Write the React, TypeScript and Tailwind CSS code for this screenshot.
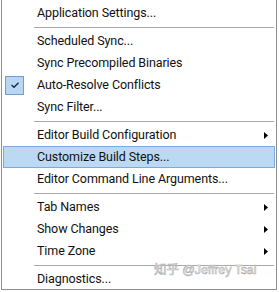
const items: (
  | { kind: "sep" }
  | { kind: "item"; label: string; sub?: boolean; checked?: boolean; active?: boolean }
)[] = [
  { kind: "item", label: "Application Settings..." },
  { kind: "sep" },
  { kind: "item", label: "Scheduled Sync..." },
  { kind: "item", label: "Sync Precompiled Binaries" },
  { kind: "item", label: "Auto-Resolve Conflicts", checked: true },
  { kind: "item", label: "Sync Filter..." },
  { kind: "sep" },
  { kind: "item", label: "Editor Build Configuration", sub: true },
  { kind: "item", label: "Customize Build Steps...", active: true },
  { kind: "item", label: "Editor Command Line Arguments..." },
  { kind: "sep" },
  { kind: "item", label: "Tab Names", sub: true },
  { kind: "item", label: "Show Changes", sub: true },
  { kind: "item", label: "Time Zone", sub: true },
  { kind: "sep" },
  { kind: "item", label: "Diagnostics..." },
];

function Arrow() {
  return (
    <svg width="4" height="7" viewBox="0 0 4 7" className="shrink-0">
      <path d="M0 0 L4 3.5 L0 7 Z" fill="#000" />
    </svg>
  );
}

function Check() {
  return (
    <div className="w-[19px] h-[19px] flex items-center justify-center bg-[#b9d6f2] border border-[#6e9fd3]">
      <svg width="8" height="6" viewBox="0 0 8 6">
        <path d="M0.5 3 L3 5.3 L7.5 0.7" stroke="#1b2b4a" strokeWidth="1.4" fill="none" />
      </svg>
    </div>
  );
}

export default function App() {
  return (
    <div className="w-[279px] h-[292px] bg-white overflow-hidden relative font-['Roboto',sans-serif] text-[12.5px] text-[#111] tracking-[-0.1px]">
      <div className="ml-[1px] w-[276px] h-[290px] border-l border-r border-b border-[#8f8f8f] bg-white pt-[2px]">
        {items.map((it, i) =>
          it.kind === "sep" ? (
            <div key={i} className="h-[6px] flex items-center pl-[32px] pr-[2px]">
              <div className="w-full h-[1px] bg-[#a9a9a9]" />
            </div>
          ) : (
            <div
              key={i}
              className={
                "h-[22px] mx-[1px] flex items-center border " +
                (it.active ? "bg-[#bcd9f4] border-[#7aaade]" : "border-transparent")
              }
            >
              <div className="w-[33px] h-full flex items-center pl-[1px]">{it.checked && <Check />}</div>
              <span className="flex-1 whitespace-nowrap leading-none">{it.label}</span>
              {it.sub && (
                <div className="pr-[6px] flex items-center">
                  <Arrow />
                </div>
              )}
            </div>
          )
        )}
      </div>
      {/* watermark */}
      <div className="absolute left-[154px] top-[264px] text-[12.5px] leading-none font-['Liberation_Sans','Noto_Sans_CJK_SC',sans-serif] text-white [-webkit-text-stroke:0.6px_#b0b0b0]">
        知乎 @Jeffrey Tsai
      </div>
    </div>
  );
}
